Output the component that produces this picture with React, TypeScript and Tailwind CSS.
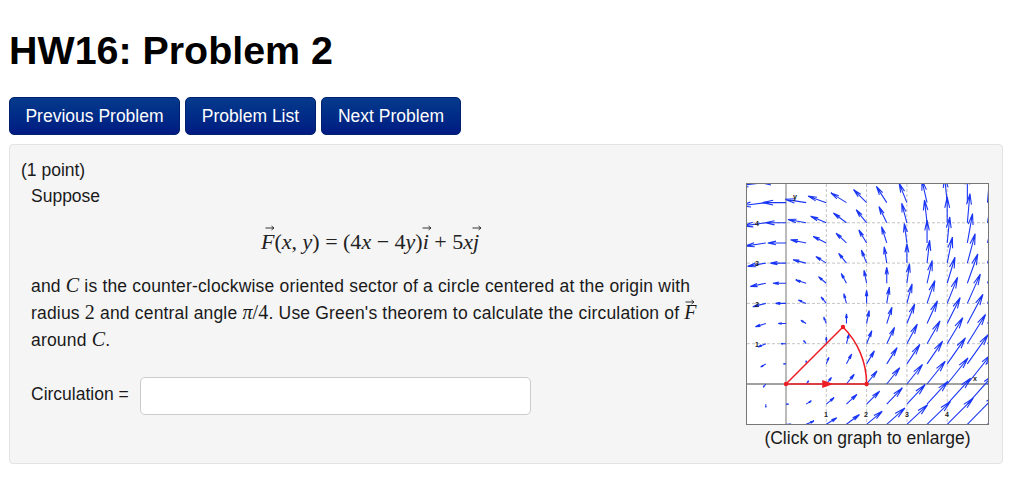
import React from "react";

const UNIT = 40.3;
const OX = 39;
const OY = 200;
const SCALE = 1.3;

function fieldArrows() {
  const out: React.ReactNode[] = [];
  for (let i = -2; i <= 10; i++) {
    for (let j = -2; j <= 10; j++) {
      const x = i / 2;
      const y = j / 2;
      const fx = 4 * x - 4 * y;
      const fy = 5 * x;
      const tx = OX + x * UNIT;
      const ty = OY - y * UNIT;
      const dx = fx * SCALE;
      const dy = -fy * SCALE;
      const len = Math.hypot(dx, dy);
      if (len < 1) continue;
      const ux = dx / len;
      const uy = dy / len;
      const hx = tx + dx;
      const hy = ty + dy;
      const hl = Math.min(len * 0.45, 11);
      const hw = hl * 0.22;
      const bx = hx - ux * hl;
      const by = hy - uy * hl;
      const d = `M${tx} ${ty}L${hx} ${hy}M${bx - uy * hw} ${by + ux * hw}L${hx} ${hy}L${bx + uy * hw} ${by - ux * hw}`;
      out.push(<path key={`${i}-${j}`} d={d} />);
    }
  }
  return out;
}

function FieldPlot() {
  const p = (x: number) => OX + x * UNIT;
  const q = (y: number) => OY - y * UNIT;
  return (
    <svg width="241" height="240" viewBox="0 0 241 240" className="block bg-white">
      <g stroke="#c4c4c4" strokeWidth="1" strokeDasharray="3 2">
        {[1, 2, 3, 4].map((v) => (
          <line key={v} x1={p(v)} y1="0" x2={p(v)} y2="240" />
        ))}
        {[1, 2, 3, 4].map((v) => (
          <line key={v} x1="0" y1={q(v)} x2="241" y2={q(v)} />
        ))}
      </g>
      <line x1={OX} y1="0" x2={OX} y2="240" stroke="#777" />
      <line x1="0" y1={OY} x2="241" y2={OY} stroke="#444" />
      <g stroke="#1a36f5" strokeWidth="1.1" fill="none">
        {fieldArrows()}
      </g>
      <g fontFamily="'Liberation Sans', sans-serif" fontSize="7" fontWeight="700" fill="#222">
        <text x="46" y="15">y</text>
        <text x="8" y="42">4</text>
        <text x="8" y="82">3</text>
        <text x="8" y="123">2</text>
        <text x="8" y="163">1</text>
        <text x="77" y="233">1</text>
        <text x="117" y="233">2</text>
        <text x="158" y="233">3</text>
        <text x="198" y="233">4</text>
        <text x="226" y="197">x</text>
      </g>
      <g stroke="#ee1c25" fill="none" strokeWidth="1.5">
        <path d={`M${OX} ${OY}L${p(2)} ${OY}`} strokeWidth="1.7" />
        <path d={`M${OX} ${OY}L${p(1.414)} ${q(1.414)}`} />
        <path d={`M${p(1.414)} ${q(1.414)}A${2 * UNIT} ${2 * UNIT} 0 0 1 ${p(2)} ${OY}`} />
      </g>
      <path d={`M${p(0.9)} ${OY - 4}L${p(0.9) + 11} ${OY}L${p(0.9)} ${OY + 4}Z`} fill="#ee1c25" />
      <circle cx={OX} cy={OY} r="2.2" fill="#ee1c25" />
      <circle cx={p(2)} cy={OY} r="2.2" fill="#ee1c25" />
      <circle cx={p(1.414)} cy={q(1.414)} r="2.2" fill="#ee1c25" />
    </svg>
  );
}

function Vec({ children, shift = 2 }: { children: React.ReactNode; shift?: number }) {
  return (
    <span className="relative inline-block">
      {children}
      <svg
        width="10"
        height="6"
        viewBox="0 0 10 6"
        className="absolute top-[-3px]"
        style={{ left: shift }}
      >
        <path d="M0.5 3H9M6.5 1L9 3L6.5 5" stroke="#222" strokeWidth="0.9" fill="none" />
      </svg>
    </span>
  );
}

const navBtn =
  "rounded-[5px] border border-[#00226e] bg-gradient-to-b from-[#063a8c] to-[#001a82] h-[38px] text-[17.5px] text-white flex items-center justify-center";

const mathText = "font-['Liberation_Serif',serif] text-[20px] leading-[20px]";

export default function App() {
  return (
    <div className="min-h-screen bg-white font-['Liberation_Sans',Arial,sans-serif] text-[#1a1a1a]">
      <h1 className="px-[9px] pt-[26px] text-[39.4px] font-bold leading-[48px] text-black">
        HW16: Problem 2
      </h1>
      <div className="mt-[23px] flex gap-[5px] pl-[9px]">
        <div className={`${navBtn} w-[171px]`}>Previous Problem</div>
        <div className={`${navBtn} w-[131px]`}>Problem List</div>
        <div className={`${navBtn} w-[140px]`}>Next Problem</div>
      </div>
      <div className="mx-[9px] mr-[21px] mt-[9px] flex h-[320px] justify-between rounded border border-[#e3e3e3] bg-[#f5f5f5] pl-[11px] pr-[13px]">
        <div className="w-[700px] text-[17.5px]">
          <div className="mt-[15px] leading-[20px]">(1 point)</div>
          <div className="ml-[10px] mt-[6px] leading-[20px]">Suppose</div>
          <div className="mt-[22px] pl-[240px] font-['Liberation_Serif',serif] text-[22px] leading-[28px] text-[#222]">
            <Vec shift={4}>
              <i>F</i>
            </Vec>
            (<i>x</i>, <i>y</i>) = (4<i>x</i> − 4<i>y</i>)
            <Vec shift={-1}>
              <i>i</i>
            </Vec>{" "}
            + 5<i>x</i>
            <Vec shift={-1}>
              <i>j</i>
            </Vec>
          </div>
          <div className="ml-[10px] mt-[17px] leading-[27px] tracking-[0.18px]">
            <div className="h-[27px] whitespace-nowrap">
              and <span className={`${mathText} italic`}>C</span> is the counter-clockwise oriented
              sector of a circle centered at the origin with
            </div>
            <div className="h-[27px] whitespace-nowrap">
              radius <span className={mathText}>2</span> and central angle{" "}
              <span className={mathText}>
                <i>π</i>/4
              </span>
              . Use Green's theorem to calculate the circulation of{" "}
              <span className={`${mathText} italic`}>
                <Vec shift={1}>F</Vec>
              </span>
            </div>
            <div className="h-[27px] whitespace-nowrap">
              around <span className={`${mathText} italic`}>C</span>.
            </div>
          </div>
          <div className="ml-[10px] mt-[23px] flex items-center gap-[11px]">
            <span className="mb-[4px]">Circulation =</span>
            <input
              type="text"
              className="h-[38px] w-[391px] rounded-[5px] border border-[#cccccc] bg-white outline-none"
            />
          </div>
        </div>
        <div className="mt-[38px] flex w-[243px] flex-col items-center">
          <div className="border border-[#777]">
            <FieldPlot />
          </div>
          <div className="mt-[3px] leading-[20px] text-[17.5px] whitespace-nowrap">
            (Click on graph to enlarge)
          </div>
        </div>
      </div>
    </div>
  );
}
